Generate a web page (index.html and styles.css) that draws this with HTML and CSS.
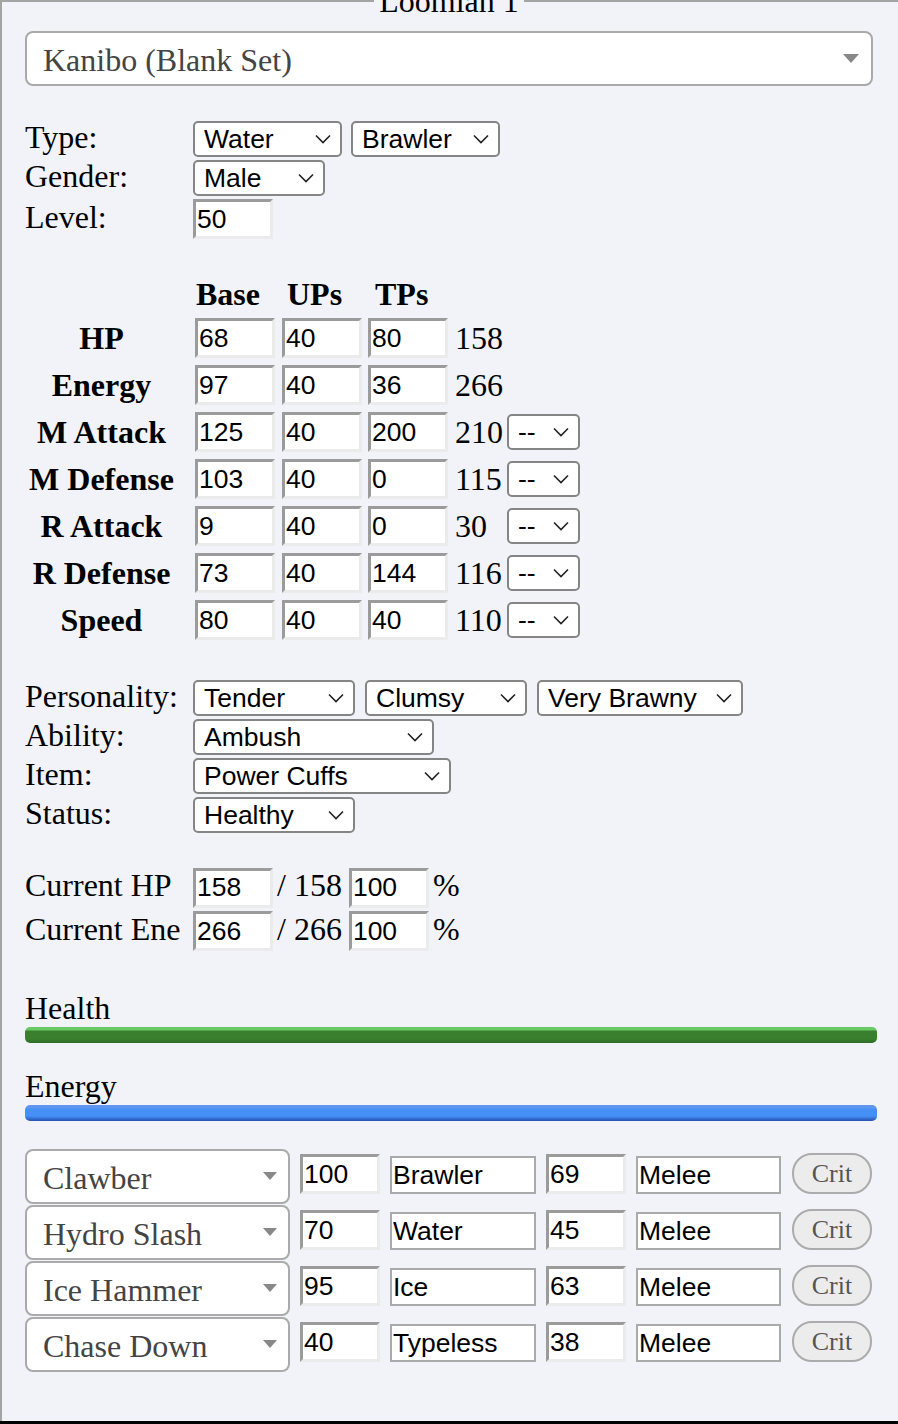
FILE: index.html
```html
<!DOCTYPE html>
<html lang="en">
<head>
<meta charset="utf-8">
<title>Loomian 1</title>
<link rel="stylesheet" href="styles.css">
</head>
<body>
<fieldset class="panel">
  <legend class="panel-title">Loomian 1</legend>

  <div class="combo combo-species">
    <span class="combo-text">Kanibo (Blank Set)</span>
    <span class="combo-arrow"></span>
  </div>

  <div class="info">
    <div class="row">
      <span class="lbl">Type:</span>
      <select class="sel sel-type"><option>Water</option></select>
      <select class="sel sel-type"><option>Brawler</option></select>
    </div>
    <div class="row">
      <span class="lbl">Gender:</span>
      <select class="sel sel-gender"><option>Male</option></select>
    </div>
    <div class="row">
      <span class="lbl">Level:</span>
      <input class="num" type="text" value="50">
    </div>
  </div>

  <div class="stats">
    <span></span>
    <span class="hd hd-base">Base</span>
    <span class="hd hd-ups">UPs</span>
    <span class="hd hd-tps">TPs</span>
    <span></span>
    <span></span>

    <span class="stat-name">HP</span>
    <input class="num" type="text" value="68">
    <input class="num" type="text" value="40">
    <input class="num" type="text" value="80">
    <span class="stat-total">158</span>
    <span></span>

    <span class="stat-name">Energy</span>
    <input class="num" type="text" value="97">
    <input class="num" type="text" value="40">
    <input class="num" type="text" value="36">
    <span class="stat-total">266</span>
    <span></span>

    <span class="stat-name">M Attack</span>
    <input class="num" type="text" value="125">
    <input class="num" type="text" value="40">
    <input class="num" type="text" value="200">
    <span class="stat-total">210</span>
    <select class="sel sel-mod"><option>--</option></select>

    <span class="stat-name">M Defense</span>
    <input class="num" type="text" value="103">
    <input class="num" type="text" value="40">
    <input class="num" type="text" value="0">
    <span class="stat-total">115</span>
    <select class="sel sel-mod"><option>--</option></select>

    <span class="stat-name">R Attack</span>
    <input class="num" type="text" value="9">
    <input class="num" type="text" value="40">
    <input class="num" type="text" value="0">
    <span class="stat-total">30</span>
    <select class="sel sel-mod"><option>--</option></select>

    <span class="stat-name">R Defense</span>
    <input class="num" type="text" value="73">
    <input class="num" type="text" value="40">
    <input class="num" type="text" value="144">
    <span class="stat-total">116</span>
    <select class="sel sel-mod"><option>--</option></select>

    <span class="stat-name">Speed</span>
    <input class="num" type="text" value="80">
    <input class="num" type="text" value="40">
    <input class="num" type="text" value="40">
    <span class="stat-total">110</span>
    <select class="sel sel-mod"><option>--</option></select>
  </div>

  <div class="info info-extra">
    <div class="row">
      <span class="lbl">Personality:</span>
      <select class="sel sel-pers"><option>Tender</option></select>
      <select class="sel sel-pers"><option>Clumsy</option></select>
      <select class="sel sel-pers-wide"><option>Very Brawny</option></select>
    </div>
    <div class="row">
      <span class="lbl">Ability:</span>
      <select class="sel sel-ability"><option>Ambush</option></select>
    </div>
    <div class="row">
      <span class="lbl">Item:</span>
      <select class="sel sel-item"><option>Power Cuffs</option></select>
    </div>
    <div class="row">
      <span class="lbl">Status:</span>
      <select class="sel sel-pers"><option>Healthy</option></select>
    </div>
  </div>

  <div class="info info-current">
    <div class="row">
      <span class="lbl">Current HP</span>
      <input class="num" type="text" value="158">
      <span class="of">/ 158</span>
      <input class="num" type="text" value="100">
      <span class="pct">%</span>
    </div>
    <div class="row">
      <span class="lbl">Current Ene</span>
      <input class="num" type="text" value="266">
      <span class="of">/ 266</span>
      <input class="num" type="text" value="100">
      <span class="pct">%</span>
    </div>
  </div>

  <div class="meter">
    <div class="meter-label">Health</div>
    <div class="bar bar-health"></div>
  </div>
  <div class="meter meter-energy">
    <div class="meter-label">Energy</div>
    <div class="bar bar-energy"></div>
  </div>

  <div class="moves">
    <div class="move">
      <div class="combo combo-move"><span class="combo-text">Clawber</span><span class="combo-arrow combo-arrow-sm"></span></div>
      <input class="num mv-field" type="text" value="100">
      <input class="txt mv-field" type="text" value="Brawler">
      <input class="num mv-field" type="text" value="69">
      <input class="txt mv-field" type="text" value="Melee">
      <button class="crit mv-field" type="button">Crit</button>
    </div>
    <div class="move">
      <div class="combo combo-move"><span class="combo-text">Hydro Slash</span><span class="combo-arrow combo-arrow-sm"></span></div>
      <input class="num mv-field" type="text" value="70">
      <input class="txt mv-field" type="text" value="Water">
      <input class="num mv-field" type="text" value="45">
      <input class="txt mv-field" type="text" value="Melee">
      <button class="crit mv-field" type="button">Crit</button>
    </div>
    <div class="move">
      <div class="combo combo-move"><span class="combo-text">Ice Hammer</span><span class="combo-arrow combo-arrow-sm"></span></div>
      <input class="num mv-field" type="text" value="95">
      <input class="txt mv-field" type="text" value="Ice">
      <input class="num mv-field" type="text" value="63">
      <input class="txt mv-field" type="text" value="Melee">
      <button class="crit mv-field" type="button">Crit</button>
    </div>
    <div class="move">
      <div class="combo combo-move"><span class="combo-text">Chase Down</span><span class="combo-arrow combo-arrow-sm"></span></div>
      <input class="num mv-field" type="text" value="40">
      <input class="txt mv-field" type="text" value="Typeless">
      <input class="num mv-field" type="text" value="38">
      <input class="txt mv-field" type="text" value="Melee">
      <button class="crit mv-field" type="button">Crit</button>
    </div>
  </div>
</fieldset>
</body>
</html>
```

FILE: styles.css
```css
html {
  background: #000;
  overflow: hidden;
}

body {
  margin: 0;
  height: 1421px;
  overflow: hidden;
  background: #f1f3f8;
  font-family: "Liberation Serif", "Times New Roman", serif;
  font-size: 32px;
  color: #000;
}

.panel {
  box-sizing: border-box;
  height: 1438px;
  margin: -17px -20px 0 0;
  border: 2px solid #a4a4a4;
  border-bottom: 0;
  padding: 12px 43px 0 23px;
  min-width: 0;
}

.panel-title {
  margin: 0 auto;
  padding: 0 5px;
  font-size: 32px;
  line-height: 36px;
}

/* searchable combo (species / moves) */
.combo {
  box-sizing: border-box;
  display: flex;
  align-items: center;
  background: #fff;
  border: 2px solid #aaa;
  border-radius: 8px;
  color: #444;
}

.combo-species {
  height: 55px;
  padding: 3px 12px 0 16px;
}

.combo-text {
  flex: 1;
  line-height: 36px;
}

.combo-arrow {
  width: 0;
  height: 0;
  border-top: 9px solid #888;
  border-left: 8px solid transparent;
  border-right: 8px solid transparent;
  margin-top: -3px;
}

.combo-arrow-sm {
  border-top-width: 8px;
  border-left-width: 7px;
  border-right-width: 7px;
}

/* label rows */
.info {
  margin-top: 35px;
  display: flex;
  flex-direction: column;
  gap: 3px;
}

.row {
  display: flex;
  align-items: baseline;
}

.lbl {
  flex: none;
  width: 168px;
  line-height: 32px;
}

.sel {
  -webkit-appearance: none;
  appearance: none;
  box-sizing: border-box;
  height: 36px;
  margin: 0 9px 0 0;
  padding: 0 30px 0 9px;
  border: 2px solid #858585;
  border-radius: 5px;
  background: #fff url("data:image/svg+xml,%3Csvg xmlns='http://www.w3.org/2000/svg' width='16' height='10' viewBox='0 0 16 10'%3E%3Cpath d='M1 1.5l7 7 7-7' fill='none' stroke='%23222' stroke-width='1.6'/%3E%3C/svg%3E") no-repeat right 9px center;
  font-family: "Liberation Sans", Arial, sans-serif;
  font-size: 26.5px;
  color: #000;
}

.sel-type { width: 149px; }
.sel-gender { width: 132px; }
.sel-pers { width: 162px; }
.sel-pers-wide { width: 206px; }
.sel-ability { width: 241px; }
.sel-item { width: 258px; }
.sel-mod { width: 73px; margin: 0; }

.num,
.txt {
  box-sizing: border-box;
  margin: 0;
  background: #fff;
  font-family: "Liberation Sans", Arial, sans-serif;
  font-size: 26.5px;
  color: #000;
  outline: none;
}

.num {
  width: 80px;
  height: 40px;
  padding: 0 1px;
  border: 3px solid;
  border-color: #9b9b9b #ebebeb #ebebeb #9b9b9b;
}

.txt {
  height: 38px;
  padding: 0 1px;
  border: 2px solid #aaa;
}

/* stats grid */
.stats {
  margin-top: 39px;
  display: grid;
  grid-template-columns: 170px 87px 86px 87px 52px 73px;
  row-gap: 7px;
  align-items: center;
}

.hd {
  font-weight: bold;
  line-height: 33px;
}

.hd-base { padding-left: 1px; }
.hd-ups { padding-left: 5px; }
.hd-tps { padding-left: 7px; }

.stat-name {
  padding-right: 17px;
  text-align: center;
  font-weight: bold;
  line-height: 40px;
}

.stat-total {
  line-height: 40px;
}

.info-extra {
  margin-top: 40px;
}

.info-extra .sel-pers,
.info-extra .sel-pers-wide {
  margin-right: 10px;
}

.info-current {
  margin-top: 34px;
}

.of {
  margin: 0 7px 0 4px;
}

.pct {
  margin-left: 4px;
}

/* meters */
.meter {
  margin-top: 41px;
}

.meter-energy {
  margin-top: 27px;
}

.meter-label {
  line-height: 32px;
}

.bar {
  margin: 3px -4px 0 0;
  height: 16px;
  border-radius: 5px;
}

.bar-health {
  background: linear-gradient(to bottom, #68c965 0, #68c965 3px, #3a7f2d 4px, #3a7f2d 12px, #2e6b27 16px);
}

.bar-energy {
  background: linear-gradient(to bottom, #5f96f0 0, #5f96f0 3px, #4590f5 4px, #4590f5 11px, #2650b2 16px);
}

/* moves */
.moves {
  margin-top: 28px;
  display: flex;
  flex-direction: column;
  gap: 1px;
}

.move {
  display: flex;
  align-items: flex-end;
  gap: 10px;
}

.combo-move {
  width: 265px;
  height: 55px;
  padding: 2px 11px 0 16px;
}

.mv-field {
  margin-bottom: 10px;
}

.move .txt {
  width: 146px;
}

.move .txt:last-of-type {
  width: 145px;
}

.crit {
  box-sizing: border-box;
  width: 80px;
  height: 41px;
  margin-left: 1px;
  padding: 0;
  border: 2px solid #ababab;
  border-radius: 20px;
  background: #ececec;
  font-family: "Liberation Serif", "Times New Roman", serif;
  font-size: 26px;
  color: #555;
}
```
